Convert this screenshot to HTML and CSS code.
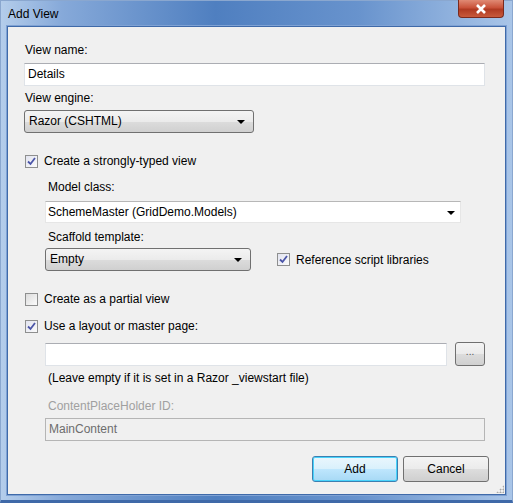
FILE: index.html
```html
<!doctype html>
<html lang="en">
<head>
	<meta charset="UTF-8">
	<title>Add View</title>
	<link rel="stylesheet" href="styles.css">
</head>
<body>
	<div class="window">
		<div class="titlebar">
			<span class="title">Add View</span>
			<div class="close"><svg width="12" height="10" viewBox="0 0 12 10"><path d="M2 1 L10 9 M10 1 L2 9" stroke="#fff" stroke-width="2.6"/></svg></div>
		</div>
		<div class="client">
			<div class="lbl first">View name:</div>
			<div class="txt full">Details</div>
			<div class="lbl gap4">View engine:</div>
			<div class="sel engine">Razor (CSHTML)<i class="arrow"></i></div>

			<div class="chkrow big">
				<span class="chk on"><svg width="9" height="9" viewBox="0 0 9 9"><path d="M1 4.5 L3.5 7 L8 1" fill="none" stroke="#4b55a8" stroke-width="1.8"/></svg></span>
				Create a strongly-typed view
			</div>
			<div class="sub">
				<div class="lbl gap10">Model class:</div>
				<div class="combo">SchemeMaster (GridDemo.Models)<i class="arrow"></i></div>
				<div class="lbl gap6">Scaffold template:</div>
				<div class="scaf">
					<div class="sel tpl">Empty<i class="arrow"></i></div>
					<div class="chkrow inline">
						<span class="chk on"><svg width="9" height="9" viewBox="0 0 9 9"><path d="M1 4.5 L3.5 7 L8 1" fill="none" stroke="#4b55a8" stroke-width="1.8"/></svg></span>
						Reference script libraries
					</div>
				</div>
			</div>

			<div class="chkrow big">
				<span class="chk"></span>
				Create as a partial view
			</div>
			<div class="chkrow mid">
				<span class="chk on"><svg width="9" height="9" viewBox="0 0 9 9"><path d="M1 4.5 L3.5 7 L8 1" fill="none" stroke="#4b55a8" stroke-width="1.8"/></svg></span>
				Use a layout or master page:
			</div>
			<div class="sub">
				<div class="pathrow">
					<div class="txt path"></div>
					<div class="dots">...</div>
				</div>
				<div class="lbl gap4">(Leave empty if it is set in a Razor _viewstart file)</div>
				<div class="lbl gap12 dis">ContentPlaceHolder ID:</div>
				<div class="txt disabled">MainContent</div>
			</div>

			<div class="buttons">
				<div class="btn def">Add</div>
				<div class="btn">Cancel</div>
			</div>
			<div class="grip"></div>
		</div>
	</div>
</body>
</html>
```

FILE: styles.css
```css
body{margin:0;
     font-family:"Liberation Sans",Arial,sans-serif;
     font-size:12px;
     color:#000;}
.window{width:513px;
        height:503px;
        box-sizing:border-box;
        background:linear-gradient(90deg,#b4cdeb 0%,#86a9d9 12%,#4f7fc0 42%,#6893cd 70%,#a9c5e8 100%);
        border:1px solid #8aa7cf;
        border-bottom:3px solid #3f69a8;
        padding:0 6px;
        position:relative;}
.titlebar{height:25px;
          display:flex;
          align-items:center;
          justify-content:space-between;}
.title{font-size:12px;
       color:#000;
       padding-top:1px;
       padding-left:1px;}
.close{position:absolute;
       top:-1px;
       right:8px;
       width:44px;
       height:17px;
       border:1px solid #7a2a1e;
       border-top:0;
       border-radius:0 0 4px 4px;
       background:linear-gradient(#e08a74 0%,#c9523a 45%,#b03a22 55%,#c85a3c 100%);
       display:flex;
       align-items:center;
       justify-content:center;}
.client{height:469px;
        box-sizing:border-box;
        background:#f0f0f0;
        border:1px solid #3f6aa9;
        box-shadow:0 0 0 1px #7fa2d4;
        padding:0 20px 0 16px;
        position:relative;}
.lbl{height:16px;
     line-height:16px;
     padding-left:1px;}
.lbl.first{margin-top:15px;}
.gap4{margin-top:4px;}
.gap6{margin-top:6px;}
.gap10{margin-top:10px;}
.gap12{margin-top:12px;}
.dis{color:#a0a0a0;}
.txt{height:23px;
     box-sizing:border-box;
     background:#fff;
     border:1px solid #dfe3e8;
     border-top-color:#abadb3;
     line-height:21px;
     padding-left:3px;}
.txt.full{margin-top:5px;}
.sel{height:23px;
     box-sizing:border-box;
     border:1px solid #707070;
     border-radius:3px;
     background:linear-gradient(#f4f4f4 0%,#ebebeb 50%,#dcdcdc 51%,#d0d0d0 100%);
     line-height:21px;
     padding-left:4px;
     position:relative;}
.engine{width:230px;
        margin-top:4px;}
.arrow{position:absolute;
       right:8px;
       top:9px;
       width:0;
       height:0;
       border-left:4px solid transparent;
       border-right:4px solid transparent;
       border-top:4px solid #000;}
.chkrow{height:16px;
        line-height:16px;
        display:flex;
        align-items:center;
        padding-left:1px;}
.chkrow.big{margin-top:20px;}
.chkrow.mid{margin-top:11px;}
.chk{width:11px;
     height:11px;
     border:1px solid #8e8f8f;
     background:linear-gradient(135deg,#dcdcdc,#fbfbfb);
     margin-right:6px;
     display:flex;
     align-items:center;
     justify-content:center;}
.chk.on{background:linear-gradient(135deg,#e2e4f0,#fafafa);}
.sub{padding-left:21px;}
.sub .lbl{padding-left:3px;}
.combo{height:22px;
       margin-top:6px;
       margin-right:24px;
       box-sizing:border-box;
       background:#fff;
       border:1px solid #e6e6e6;
       border-top-color:#b7b7b7;
       line-height:20px;
       padding-left:2px;
       position:relative;}
.combo .arrow{right:5px;}
.scaf{display:flex;
      align-items:center;
      margin-top:3px;}
.tpl{width:206px;
     height:23px;}
.chkrow.inline{margin-left:25px;}
.pathrow{display:flex;
         align-items:center;
         margin-top:9px;}
.path{width:403px;}
.dots{width:30px;
      height:24px;
      box-sizing:border-box;
      margin-left:8px;
      margin-top:-2px;
      border:1px solid #707070;
      border-radius:3px;
      background:linear-gradient(#f4f4f4 0%,#ebebeb 50%,#dcdcdc 51%,#d0d0d0 100%);
      text-align:center;
      line-height:18px;
      font-size:10px;
      color:#555;}
.disabled{margin-top:4px;
          background:#f0f0f0;
          border:1px solid #b5b5b5;
          color:#6d6d6d;}
.buttons{display:flex;
         justify-content:flex-end;
         gap:5px;
         margin-top:15px;
         margin-right:-4px;}
.btn{width:86px;
     height:26px;
     box-sizing:border-box;
     border:1px solid #707070;
     border-radius:3px;
     background:linear-gradient(#f4f4f4 0%,#ebebeb 50%,#dddddd 51%,#cfcfcf 100%);
     text-align:center;
     line-height:24px;}
.btn.def{border-color:#3c7fb1;
         box-shadow:inset 0 0 0 1px #48d3fb;
         background:linear-gradient(#eaf6fd 0%,#d9f0fc 50%,#bee6fd 51%,#a7d9f5 100%);}
.grip{position:absolute;
      right:1px;
      bottom:1px;
      width:8px;
      height:8px;
      background:radial-gradient(circle,#a8a8a8 0.8px,transparent 1.2px) 0 0/3px 3px;
      clip-path:polygon(100% 0,100% 100%,0 100%);}
```
